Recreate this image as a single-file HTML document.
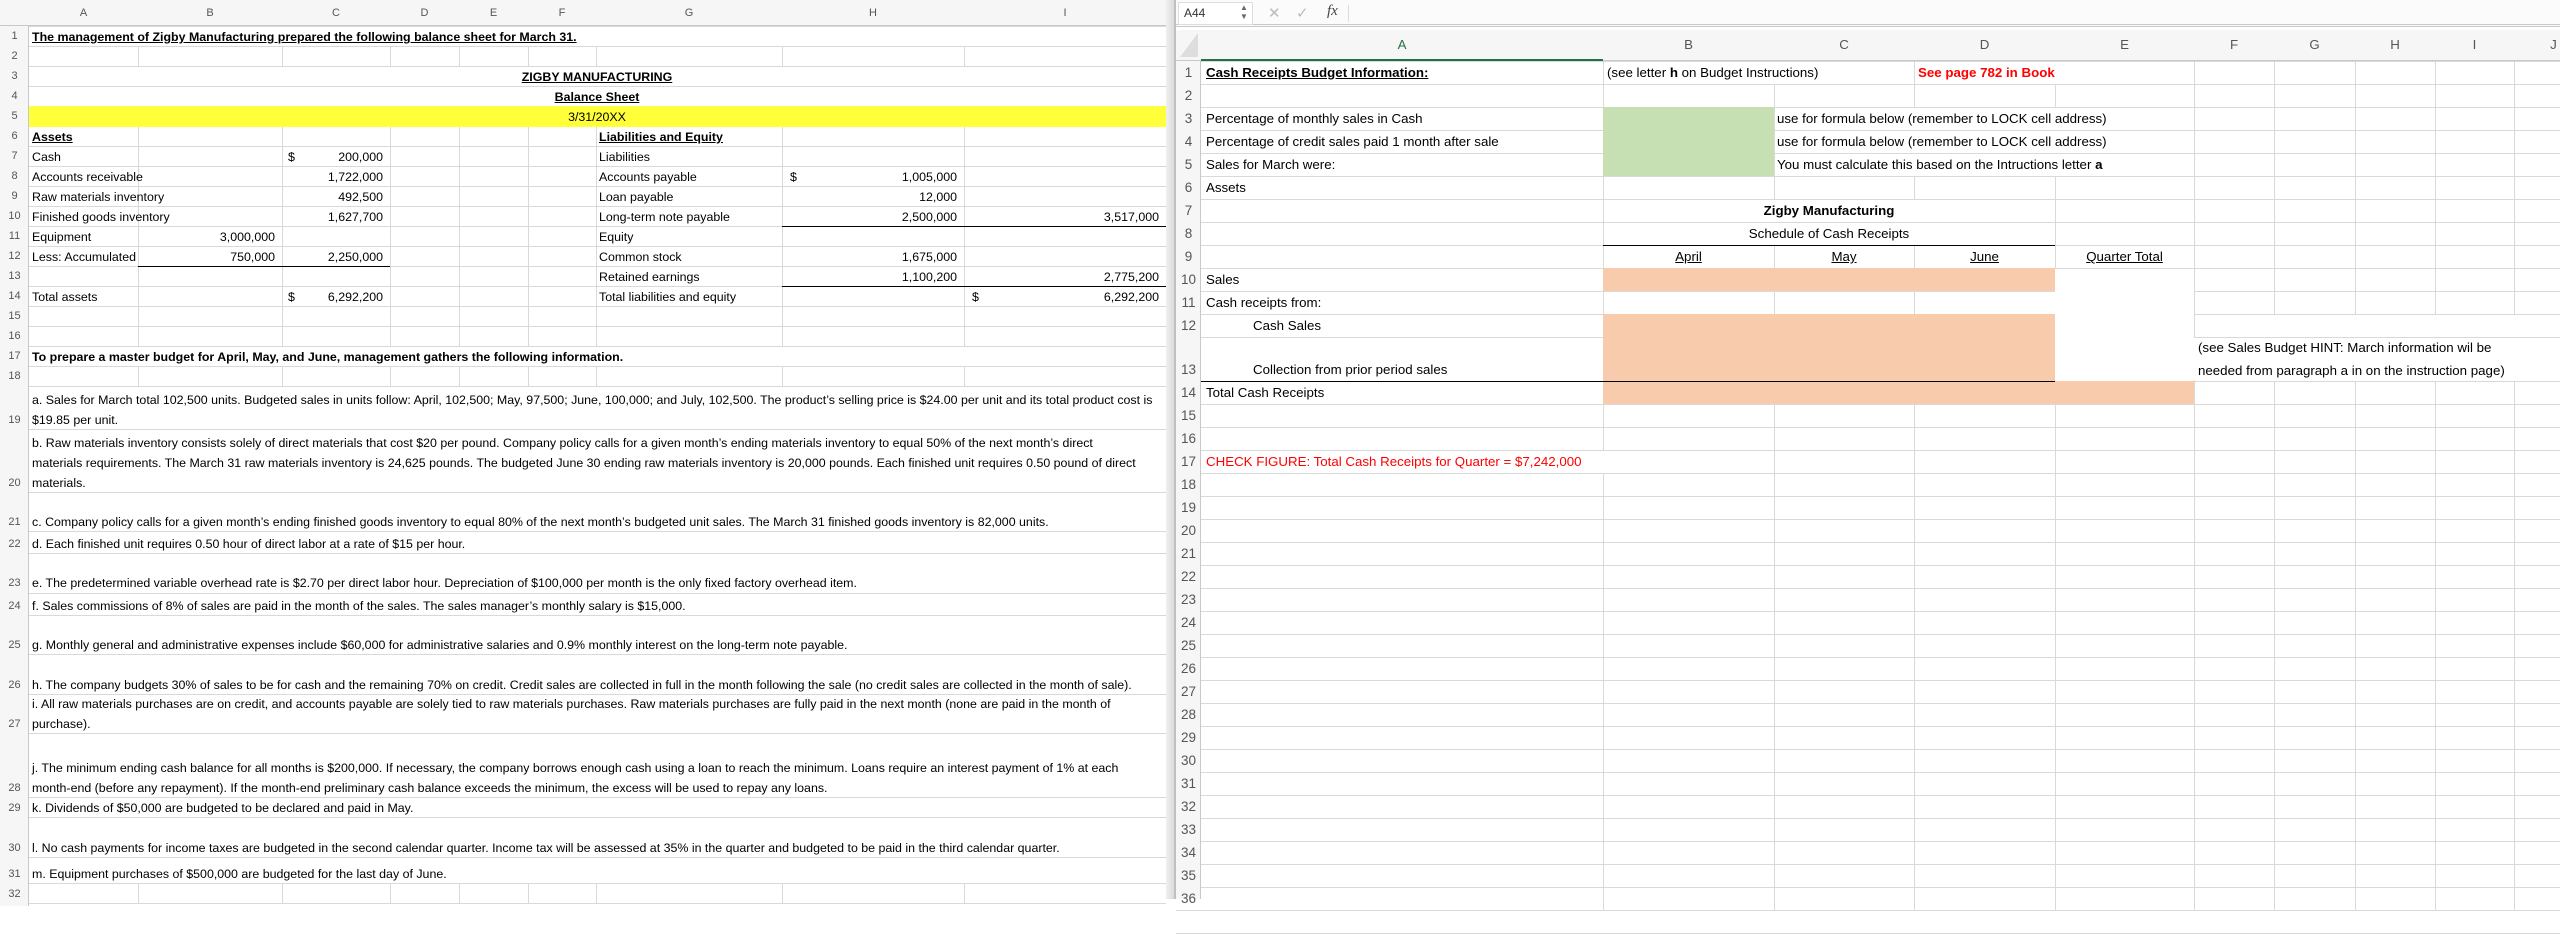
<!DOCTYPE html>
<html><head><meta charset="utf-8">
<style>
*{margin:0;padding:0;box-sizing:border-box}
body{width:2560px;height:899px;overflow:hidden;background:#fff;font-family:"Liberation Sans",Arial,sans-serif;position:relative;color:#000}
.a{position:absolute;white-space:nowrap}
.L{font-size:12.4px;line-height:14px}
.L.hd,.L.rn{font-size:11px}
.R{font-size:13.3px;line-height:18px}
.b{font-weight:bold}
.u{text-decoration:underline}
.rn{color:#555;text-align:center}
.hd{color:#555;text-align:center}
.ln{position:absolute}
</style></head><body>
<div id="g"></div>

<div class="a" style="left:0;top:0;width:1166px;height:26px;background:#f6f6f6;border-bottom:1px solid #c8c8c8"></div>
<div class="a" style="left:0;top:26px;width:29px;height:880px;background:#f6f6f6;border-right:1px solid #c8c8c8"></div>
<div class="a" style="left:1166px;top:0;width:9px;height:899px;background:linear-gradient(90deg,#f0f0f0,#d8d8d8)"></div>
<div class="a" style="left:1174px;top:0;width:2px;height:899px;background:#c0c0c0"></div>

<div class="a" style="left:1176px;top:0;width:1384px;height:27px;background:#fbfbfb;border-bottom:3px double #c8c8c8"></div>
<div class="a" style="left:1178px;top:2px;width:75px;height:23px;background:#fff;border:1px solid #ddd"></div>
<div class="a" style="left:1184px;top:6px;font-size:12px;color:#333">A44</div>
<div class="a" style="left:1240px;top:3px;font-size:8px;line-height:9px;color:#666">▲<br>▼</div>
<div class="a" style="left:1268px;top:4px;font-size:15px;color:#bbb">✕</div>
<div class="a" style="left:1296px;top:4px;font-size:15px;color:#bbb">✓</div>
<div class="a" style="left:1327px;top:3px;font-size:15px;color:#444;font-family:'Liberation Serif',serif;font-style:italic">fx</div>
<div class="a" style="left:1348px;top:5px;width:1px;height:17px;background:#ddd"></div>
<div class="a" style="left:1176px;top:30px;width:1384px;height:31px;background:#f6f6f6;border-bottom:1px solid #c8c8c8"></div>
<div class="a" style="left:1176px;top:61px;width:25px;height:838px;background:#f6f6f6;border-right:1px solid #c8c8c8"></div>
<div class="a" style="left:1201px;top:59px;width:402px;height:2px;background:#217346"></div>
<div class="a" style="left:1180px;top:33px;width:0;height:0;border-left:18px solid transparent;border-bottom:24px solid #ddd"></div>

<div class="a" style="left:29px;top:106px;width:1137px;height:21px;background:#ffff3a"></div>

<div id="fills"></div>

<div class="a L hd" style="left:29px;top:6px;width:109px">A</div>
<div class="a L hd" style="left:138px;top:6px;width:144px">B</div>
<div class="a L hd" style="left:282px;top:6px;width:108px">C</div>
<div class="a L hd" style="left:390px;top:6px;width:69px">D</div>
<div class="a L hd" style="left:459px;top:6px;width:69px">E</div>
<div class="a L hd" style="left:528px;top:6px;width:68px">F</div>
<div class="a L hd" style="left:596px;top:6px;width:186px">G</div>
<div class="a L hd" style="left:782px;top:6px;width:182px">H</div>
<div class="a L hd" style="left:964px;top:6px;width:202px">I</div>

<div class="a L rn" style="left:0;width:29px;top:29px">1</div>
<div class="a L rn" style="left:0;width:29px;top:49px">2</div>
<div class="a L rn" style="left:0;width:29px;top:69px">3</div>
<div class="a L rn" style="left:0;width:29px;top:89px">4</div>
<div class="a L rn" style="left:0;width:29px;top:109px">5</div>
<div class="a L rn" style="left:0;width:29px;top:129px">6</div>
<div class="a L rn" style="left:0;width:29px;top:149px">7</div>
<div class="a L rn" style="left:0;width:29px;top:169px">8</div>
<div class="a L rn" style="left:0;width:29px;top:189px">9</div>
<div class="a L rn" style="left:0;width:29px;top:209px">10</div>
<div class="a L rn" style="left:0;width:29px;top:229px">11</div>
<div class="a L rn" style="left:0;width:29px;top:249px">12</div>
<div class="a L rn" style="left:0;width:29px;top:269px">13</div>
<div class="a L rn" style="left:0;width:29px;top:289px">14</div>
<div class="a L rn" style="left:0;width:29px;top:309px">15</div>
<div class="a L rn" style="left:0;width:29px;top:329px">16</div>
<div class="a L rn" style="left:0;width:29px;top:349px">17</div>
<div class="a L rn" style="left:0;width:29px;top:369px">18</div>
<div class="a L rn" style="left:0;width:29px;top:413px">19</div>
<div class="a L rn" style="left:0;width:29px;top:476px">20</div>
<div class="a L rn" style="left:0;width:29px;top:515px">21</div>
<div class="a L rn" style="left:0;width:29px;top:537px">22</div>
<div class="a L rn" style="left:0;width:29px;top:576px">23</div>
<div class="a L rn" style="left:0;width:29px;top:599px">24</div>
<div class="a L rn" style="left:0;width:29px;top:638px">25</div>
<div class="a L rn" style="left:0;width:29px;top:678px">26</div>
<div class="a L rn" style="left:0;width:29px;top:717px">27</div>
<div class="a L rn" style="left:0;width:29px;top:781px">28</div>
<div class="a L rn" style="left:0;width:29px;top:801px">29</div>
<div class="a L rn" style="left:0;width:29px;top:841px">30</div>
<div class="a L rn" style="left:0;width:29px;top:867px">31</div>
<div class="a L rn" style="left:0;width:29px;top:887px">32</div>

<div class="a L b u" style="left:32px;top:30px">The management of Zigby Manufacturing prepared the following balance sheet for March 31.</div>
<div class="a L b u" style="left:497px;top:70px;width:200px;text-align:center">ZIGBY MANUFACTURING</div>
<div class="a L b u" style="left:497px;top:90px;width:200px;text-align:center">Balance Sheet</div>
<div class="a L" style="left:497px;top:110px;width:200px;text-align:center">3/31/20XX</div>
<div class="a L b u" style="left:32px;top:130px">Assets</div>
<div class="a L" style="left:32px;top:150px">Cash</div>
<div class="a L" style="left:32px;top:170px">Accounts receivable</div>
<div class="a L" style="left:32px;top:190px">Raw materials inventory</div>
<div class="a L" style="left:32px;top:210px">Finished goods inventory</div>
<div class="a L" style="left:32px;top:230px">Equipment</div>
<div class="a L" style="left:32px;top:250px">Less: Accumulated</div>
<div class="a L" style="left:32px;top:290px">Total assets</div>
<div class="a L" style="left:288px;top:150px">$</div>
<div class="a L" style="left:288px;top:290px">$</div>
<div class="a L" style="left:282px;top:150px;width:101px;text-align:right">200,000</div>
<div class="a L" style="left:282px;top:170px;width:101px;text-align:right">1,722,000</div>
<div class="a L" style="left:282px;top:190px;width:101px;text-align:right">492,500</div>
<div class="a L" style="left:282px;top:210px;width:101px;text-align:right">1,627,700</div>
<div class="a L" style="left:282px;top:250px;width:101px;text-align:right">2,250,000</div>
<div class="a L" style="left:282px;top:290px;width:101px;text-align:right">6,292,200</div>
<div class="a L" style="left:138px;top:230px;width:137px;text-align:right">3,000,000</div>
<div class="a L" style="left:138px;top:250px;width:137px;text-align:right">750,000</div>

<div class="a L b u" style="left:599px;top:130px">Liabilities and Equity</div>
<div class="a L" style="left:599px;top:150px">Liabilities</div>
<div class="a L" style="left:599px;top:170px">Accounts payable</div>
<div class="a L" style="left:599px;top:190px">Loan payable</div>
<div class="a L" style="left:599px;top:210px">Long-term note payable</div>
<div class="a L" style="left:599px;top:230px">Equity</div>
<div class="a L" style="left:599px;top:250px">Common stock</div>
<div class="a L" style="left:599px;top:270px">Retained earnings</div>
<div class="a L" style="left:599px;top:290px">Total liabilities and equity</div>
<div class="a L" style="left:790px;top:170px">$</div>
<div class="a L" style="left:782px;top:170px;width:175px;text-align:right">1,005,000</div>
<div class="a L" style="left:782px;top:190px;width:175px;text-align:right">12,000</div>
<div class="a L" style="left:782px;top:210px;width:175px;text-align:right">2,500,000</div>
<div class="a L" style="left:782px;top:250px;width:175px;text-align:right">1,675,000</div>
<div class="a L" style="left:782px;top:270px;width:175px;text-align:right">1,100,200</div>
<div class="a L" style="left:972px;top:290px">$</div>
<div class="a L" style="left:964px;top:210px;width:195px;text-align:right">3,517,000</div>
<div class="a L" style="left:964px;top:270px;width:195px;text-align:right">2,775,200</div>
<div class="a L" style="left:964px;top:290px;width:195px;text-align:right">6,292,200</div>

<div class="a L b" style="left:32px;top:350px">To prepare a master budget for April, May, and June, management gathers the following information.</div>
<div class="a L" style="left:32px;top:393px">a. Sales for March total 102,500 units. Budgeted sales in units follow: April, 102,500; May, 97,500; June, 100,000; and July, 102,500. The product’s selling price is $24.00 per unit and its total product cost is</div>
<div class="a L" style="left:32px;top:413px">$19.85 per unit.</div>
<div class="a L" style="left:32px;top:436px">b. Raw materials inventory consists solely of direct materials that cost $20 per pound. Company policy calls for a given month’s ending materials inventory to equal 50% of the next month’s direct</div>
<div class="a L" style="left:32px;top:456px">materials requirements. The March 31 raw materials inventory is 24,625 pounds. The budgeted June 30 ending raw materials inventory is 20,000 pounds. Each finished unit requires 0.50 pound of direct</div>
<div class="a L" style="left:32px;top:476px">materials.</div>
<div class="a L" style="left:32px;top:515px">c. Company policy calls for a given month’s ending finished goods inventory to equal 80% of the next month’s budgeted unit sales. The March 31 finished goods inventory is 82,000 units.</div>
<div class="a L" style="left:32px;top:537px">d. Each finished unit requires 0.50 hour of direct labor at a rate of $15 per hour.</div>
<div class="a L" style="left:32px;top:576px">e. The predetermined variable overhead rate is $2.70 per direct labor hour. Depreciation of $100,000 per month is the only fixed factory overhead item.</div>
<div class="a L" style="left:32px;top:599px">f. Sales commissions of 8% of sales are paid in the month of the sales. The sales manager’s monthly salary is $15,000.</div>
<div class="a L" style="left:32px;top:638px">g. Monthly general and administrative expenses include $60,000 for administrative salaries and 0.9% monthly interest on the long-term note payable.</div>
<div class="a L" style="left:32px;top:678px">h. The company budgets 30% of sales to be for cash and the remaining 70% on credit. Credit sales are collected in full in the month following the sale (no credit sales are collected in the month of sale).</div>
<div class="a L" style="left:32px;top:697px">i. All raw materials purchases are on credit, and accounts payable are solely tied to raw materials purchases. Raw materials purchases are fully paid in the next month (none are paid in the month of</div>
<div class="a L" style="left:32px;top:717px">purchase).</div>
<div class="a L" style="left:32px;top:761px">j. The minimum ending cash balance for all months is $200,000. If necessary, the company borrows enough cash using a loan to reach the minimum. Loans require an interest payment of 1% at each</div>
<div class="a L" style="left:32px;top:781px">month-end (before any repayment). If the month-end preliminary cash balance exceeds the minimum, the excess will be used to repay any loans.</div>
<div class="a L" style="left:32px;top:801px">k. Dividends of $50,000 are budgeted to be declared and paid in May.</div>
<div class="a L" style="left:32px;top:841px">l. No cash payments for income taxes are budgeted in the second calendar quarter. Income tax will be assessed at 35% in the quarter and budgeted to be paid in the third calendar quarter.</div>
<div class="a L" style="left:32px;top:867px">m. Equipment purchases of $500,000 are budgeted for the last day of June.</div>

<div class="a R hd" style="left:1201px;top:36px;width:402px;color:#217346">A</div>
<div class="a R hd" style="left:1603px;top:36px;width:171px">B</div>
<div class="a R hd" style="left:1774px;top:36px;width:140px">C</div>
<div class="a R hd" style="left:1914px;top:36px;width:141px">D</div>
<div class="a R hd" style="left:2055px;top:36px;width:139px">E</div>
<div class="a R hd" style="left:2194px;top:36px;width:80px">F</div>
<div class="a R hd" style="left:2274px;top:36px;width:81px">G</div>
<div class="a R hd" style="left:2355px;top:36px;width:80px">H</div>
<div class="a R hd" style="left:2435px;top:36px;width:79px">I</div>
<div class="a R hd" style="left:2514px;top:36px;width:79px">J</div>

<div id="rn"></div>

<div class="a R b u" style="left:1206px;top:64px">Cash Receipts Budget Information:</div>
<div class="a R" style="left:1607px;top:64px">(see letter <b>h</b> on Budget Instructions)</div>
<div class="a R b" style="left:1918px;top:64px;color:#f00">See page 782 in Book</div>
<div class="a R" style="left:1206px;top:110px">Percentage of monthly sales in Cash</div>
<div class="a R" style="left:1206px;top:133px">Percentage of credit sales paid 1 month after sale</div>
<div class="a R" style="left:1206px;top:156px">Sales for March were:</div>
<div class="a R" style="left:1777px;top:110px">use for formula below (remember to LOCK cell address)</div>
<div class="a R" style="left:1777px;top:133px">use for formula below (remember to LOCK cell address)</div>
<div class="a R" style="left:1777px;top:156px">You must calculate this based on the Intructions letter <b>a</b></div>
<div class="a R" style="left:1206px;top:179px">Assets</div>
<div class="a R b" style="left:1603px;top:202px;width:452px;text-align:center">Zigby Manufacturing</div>
<div class="a R" style="left:1603px;top:225px;width:452px;text-align:center">Schedule of Cash Receipts</div>
<div class="a R u" style="left:1603px;top:248px;width:171px;text-align:center">April</div>
<div class="a R u" style="left:1774px;top:248px;width:140px;text-align:center">May</div>
<div class="a R u" style="left:1914px;top:248px;width:141px;text-align:center">June</div>
<div class="a R u" style="left:2055px;top:248px;width:139px;text-align:center">Quarter Total</div>
<div class="a R" style="left:1206px;top:271px">Sales</div>
<div class="a R" style="left:1206px;top:294px">Cash receipts from:</div>
<div class="a R" style="left:1253px;top:317px">Cash Sales</div>
<div class="a R" style="left:1253px;top:361px">Collection from prior period sales</div>
<div class="a R" style="left:1206px;top:384px">Total Cash Receipts</div>
<div class="a R" style="left:2198px;top:339px">(see Sales Budget HINT: March information wil be</div>
<div class="a R" style="left:2198px;top:362px">needed from paragraph a in on the instruction page)</div>
<div class="a R" style="left:1206px;top:453px;color:#f00">CHECK FIGURE: Total Cash Receipts for Quarter = $7,242,000</div>

<script>
var G=document.getElementById('g'),F=document.getElementById('fills');
function box(p,x,y,w,h,c){var d=document.createElement('div');d.className='ln';d.style.cssText='left:'+x+'px;top:'+y+'px;width:'+w+'px;height:'+h+'px;background:'+c;p.appendChild(d);}
var GC='#d9d9d9';
var rL=[26,46,66,86,106,126,146,166,186,206,226,246,266,286,306,326,346,366,386,429,492,531,553,593,615,654,694,733,797,817,857,883,903];
var cL=[138,282,390,459,528,596,782,964];
rL.forEach(function(y){box(G,0,y,1166,1,GC);});
var vRows=[2,6,7,8,9,10,11,12,13,14,15,16,18,32];
vRows.forEach(function(r){var y1=rL[r-1],y2=rL[r]||903;cL.forEach(function(x){box(G,x,y1,1,y2-y1,GC);});});
cL.forEach(function(x){box(G,x,0,1,26,'#d0d0d0');});
var rR=[61];for(var i=1;i<=37;i++){rR.push(i<=12?61+23*i:(i==13?381:381+23*(i-13)));}
var cR=[1603,1774,1914,2055,2194,2274,2355,2435,2514];
rR.forEach(function(y){box(G,1176,y,1384,1,GC);});
var skip={1:[1774,2055],3:[1914,2055],4:[1914,2055],5:[1914,2055],7:[1774,1914],8:[1774,1914],12:[2274,2355,2435,2514],13:[2274,2355,2435,2514],17:[1603]};
for(var r=1;r<=36;r++){var y1=rR[r-1],y2=rR[r];cR.forEach(function(x){if(skip[r]&&skip[r].indexOf(x)>=0)return;box(G,x,y1,1,y2-y1,GC);});}
cR.forEach(function(x){box(G,x,30,1,31,'#d0d0d0');});
box(F,1603,107,171,69,'#c6e0b4');
box(F,1603,268,452,23,'#f8cbad');
box(F,1603,314,452,67,'#f8cbad');
box(F,1603,381,591,23,'#f8cbad');
box(F,2055,269,139,112,'#fff');
box(F,2194,338,366,42,'#fff');
box(F,138,266,252,1,'#000');
box(F,782,226,384,1,'#000');
box(F,782,286,384,1,'#000');
box(F,1603,245,452,1,'#000');
box(F,1201,381,854,1,'#000');
var RN=document.getElementById('rn');
for(var r=1;r<=36;r++){var d=document.createElement('div');d.className='a rn';d.style.cssText='left:1176px;width:25px;font-size:13.5px;line-height:18px;top:'+(rR[r]-20)+'px';d.textContent=r;RN.appendChild(d);}
</script>
</body></html>
